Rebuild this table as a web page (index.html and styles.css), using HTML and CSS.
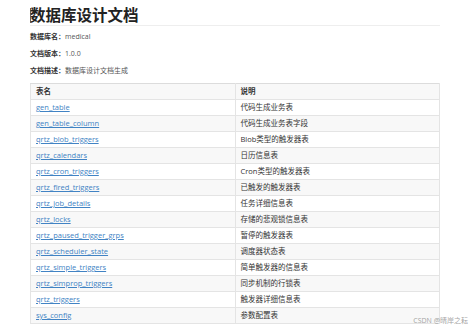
FILE: index.html
```html
<!DOCTYPE html>
<html lang="zh-CN">
<head>
    <meta charset="UTF-8">
    <meta name="viewport" content="width=device-width, initial-scale=1.0">
    <title>数据库设计文档</title>
    <link rel="stylesheet" href="styles.css">
</head>
<body>
<div class="page">
    <h1 class="title"><span class="caret"></span>数据库设计文档</h1>
    <p class="meta"><b>数据库名：</b>medical</p>
    <p class="meta"><b>文档版本：</b>1.0.0</p>
    <p class="meta"><b>文档描述：</b>数据库设计文档生成</p>
    <table class="tables">
        <thead>
            <tr><th>表名</th><th>说明</th></tr>
        </thead>
        <tbody>
            <tr><td><a href="#">gen_table</a></td><td>代码生成业务表</td></tr>
            <tr><td><a href="#">gen_table_column</a></td><td>代码生成业务表字段</td></tr>
            <tr><td><a href="#">qrtz_blob_triggers</a></td><td>Blob类型的触发器表</td></tr>
            <tr><td><a href="#">qrtz_calendars</a></td><td>日历信息表</td></tr>
            <tr><td><a href="#">qrtz_cron_triggers</a></td><td>Cron类型的触发器表</td></tr>
            <tr><td><a href="#">qrtz_fired_triggers</a></td><td>已触发的触发器表</td></tr>
            <tr><td><a href="#">qrtz_job_details</a></td><td>任务详细信息表</td></tr>
            <tr><td><a href="#">qrtz_locks</a></td><td>存储的悲观锁信息表</td></tr>
            <tr><td><a href="#">qrtz_paused_trigger_grps</a></td><td>暂停的触发器表</td></tr>
            <tr><td><a href="#">qrtz_scheduler_state</a></td><td>调度器状态表</td></tr>
            <tr><td><a href="#">qrtz_simple_triggers</a></td><td>简单触发器的信息表</td></tr>
            <tr><td><a href="#">qrtz_simprop_triggers</a></td><td>同步机制的行锁表</td></tr>
            <tr><td><a href="#">qrtz_triggers</a></td><td>触发器详细信息表</td></tr>
            <tr><td><a href="#">sys_config</a></td><td>参数配置表</td></tr>
        </tbody>
    </table>
</div>
<div class="watermark">CSDN @晴岸之耘</div>
</body>
</html>
```

FILE: styles.css
```css
body, html {
    margin: 0;
    height: 100%;
    overflow: hidden;
    background: white;
}
body {
    font-family: "Open Sans", "Noto Sans CJK SC", sans-serif;
    color: #333;
}
.page {
    width: 410px;
    padding-left: 30px;
    display: flex;
    flex-direction: column;
    gap: 7px;
}
.title {
    margin: 5px 0 -1px 0;
    font-size: 15.5px;
    line-height: 20px;
    font-weight: bold;
    color: #222;
    border-bottom: 1px solid #eee;
}
.caret {
    display: inline-block;
    width: 1px;
    height: 15px;
    margin-right: -1px;
    vertical-align: -2px;
    background: #666;
}
.meta {
    margin: 0;
    font-size: 7px;
    line-height: 10px;
    color: #555;
}
.meta b {
    color: #333;
}
.tables {
    width: 410px;
    table-layout: fixed;
    border-collapse: collapse;
    font-size: 7.5px;
    line-height: 15px;
}
.tables th, .tables td {
    height: 15px;
    padding: 0 5px;
    border: 1px solid #e4e4e4;
    text-align: left;
    white-space: nowrap;
    overflow: hidden;
}
.tables thead, .tables tbody tr:nth-child(2n) {
    background-color: #f8f8f8;
}
.tables thead th {
    border-top-color: #dcdcdc;
}
.tables a {
    color: #4183c4;
}
.watermark {
    position: absolute;
    right: 6px;
    bottom: 1px;
    font-family: "Open Sans", "Noto Sans CJK SC", sans-serif;
    font-size: 7px;
    color: rgba(130, 130, 130, 0.75);
}
```
